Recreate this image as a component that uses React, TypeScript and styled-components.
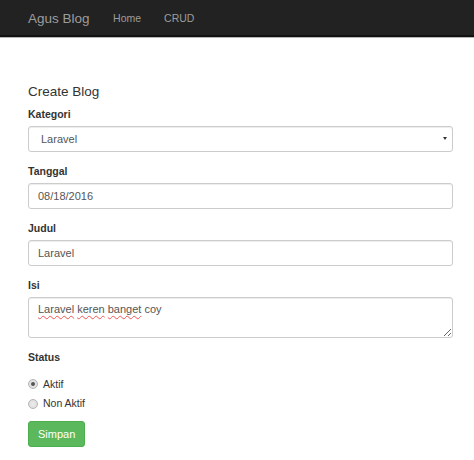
import styled, { createGlobalStyle } from 'styled-components'

const GlobalStyle = createGlobalStyle`
    * { box-sizing: border-box; }
    body {
        margin: 0;
        background: #fff;
        font-family: "Liberation Sans", Arial, sans-serif;
        font-size: 10.5px;
        line-height: 15px;
        color: #333;
    }
`

const Navbar = styled.nav`
    height: 37px;
    background: #222;
    border-bottom: 2px solid #111;
    box-shadow: 0 1px 0 #b5b5b5;
    display: flex;
    align-items: center;
    padding: 1px 0 0 28px;
`

const Brand = styled.a`
    font-size: 13.5px;
    color: #9d9d9d;
    text-decoration: none;
    margin-right: 12px;
`

const NavLink = styled.a`
    font-size: 10.5px;
    color: #9d9d9d;
    text-decoration: none;
    padding: 0 11.5px;
`

const Main = styled.main`
    padding: 47px 21px 0 28px;
`

const Title = styled.h4`
    margin: 0 0 7.5px;
    font-size: 13.5px;
    font-weight: 500;
    line-height: 15px;
`

const FormGroup = styled.div`
    margin-bottom: 12px;
`

const Label = styled.label`
    display: block;
    font-weight: bold;
    line-height: 15px;
    margin-bottom: 4px;
`

const Field = styled.div`
    position: relative;
`

const Control = styled.input`
    display: block;
    width: 100%;
    height: 26px;
    padding: 4.5px 9px;
    font-family: inherit;
    font-size: 11px;
    color: #555;
    background: #fff;
    border: 1px solid #ccc;
    border-radius: 3px;
    box-shadow: inset 0 1px 1px rgba(0, 0, 0, 0.075);
`

const Select = styled(Control).attrs({ as: 'select' })`
    appearance: none;
    padding-left: 12px;
`

const Caret = styled.span`
    position: absolute;
    right: 6px;
    top: 11.5px;
    width: 0;
    height: 0;
    border-left: 2.5px solid transparent;
    border-right: 2.5px solid transparent;
    border-top: 3.5px solid #333;
    pointer-events: none;
`

const TextArea = styled.div`
    width: 100%;
    height: 41px;
    padding: 4.5px 9px;
    font-size: 11px;
    color: #555;
    border: 1px solid #ccc;
    border-radius: 3px;
    box-shadow: inset 0 1px 1px rgba(0, 0, 0, 0.075);
    resize: vertical;
    overflow: auto;
`

const Misspelled = styled.span`
    text-decoration: underline wavy #e55;
    text-decoration-thickness: 1px;
    text-underline-offset: 2px;
`

const RadioList = styled.div`
    display: flex;
    flex-direction: column;
    gap: 4.5px;
    margin: 12px 0 10px;
`

const RadioRow = styled.label`
    display: flex;
    align-items: center;
    gap: 5px;
    height: 15px;
`

const Radio = styled.span<{ $checked?: boolean }>`
    width: 10px;
    height: 10px;
    border-radius: 50%;
    border: 1px solid #b4b4b4;
    background: radial-gradient(circle, #ececec 0%, #dadada 100%);
    display: flex;
    align-items: center;
    justify-content: center;

    &::after {
        content: '';
        display: ${(p) => (p.$checked ? 'block' : 'none')};
        width: 4px;
        height: 4px;
        border-radius: 50%;
        background: #555;
    }
`

const Button = styled.button`
    height: 26px;
    padding: 0 9px;
    font-family: inherit;
    font-size: 11px;
    color: #fff;
    background: #5cb85c;
    border: 1px solid #4cae4c;
    border-radius: 3px;
`

export default function App() {
    return (
        <>
            <GlobalStyle />
            <Navbar>
                <Brand href="#">Agus Blog</Brand>
                <NavLink href="#">Home</NavLink>
                <NavLink href="#">CRUD</NavLink>
            </Navbar>
            <Main>
                <Title>Create Blog</Title>
                <FormGroup>
                    <Label>Kategori</Label>
                    <Field>
                        <Select defaultValue="Laravel">
                            <option>Laravel</option>
                        </Select>
                        <Caret />
                    </Field>
                </FormGroup>
                <FormGroup>
                    <Label>Tanggal</Label>
                    <Control defaultValue="08/18/2016" />
                </FormGroup>
                <FormGroup>
                    <Label>Judul</Label>
                    <Control defaultValue="Laravel" />
                </FormGroup>
                <FormGroup>
                    <Label>Isi</Label>
                    <TextArea>
                        <Misspelled>Laravel</Misspelled> <Misspelled>keren</Misspelled>{' '}
                        <Misspelled>banget</Misspelled> coy
                    </TextArea>
                </FormGroup>
                <Label>Status</Label>
                <RadioList>
                    <RadioRow>
                        <Radio $checked />
                        Aktif
                    </RadioRow>
                    <RadioRow>
                        <Radio />
                        Non Aktif
                    </RadioRow>
                </RadioList>
                <Button>Simpan</Button>
            </Main>
        </>
    )
}
